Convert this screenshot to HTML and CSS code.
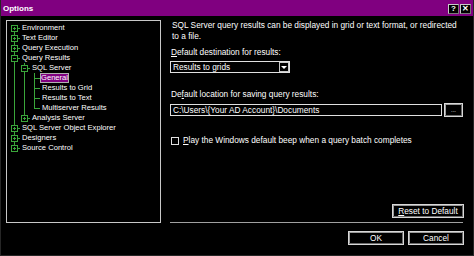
FILE: index.html
```html
<!DOCTYPE html>
<html lang="en">
<head>
<meta charset="UTF-8">
<title>Options</title>
<link rel="stylesheet" href="styles.css">
</head>
<body>
<svg class="defs" width="0" height="0">
    <symbol id="plus" viewBox="0 0 7 7">
        <rect x="0.5" y="0.5" width="6" height="6" fill="#000" stroke="#3aa63a"/>
        <path d="M2 3.5h3M3.5 2v3" stroke="#3aa63a"/>
    </symbol>
    <symbol id="minus" viewBox="0 0 7 7">
        <rect x="0.5" y="0.5" width="6" height="6" fill="#000" stroke="#3aa63a"/>
        <path d="M2 3.5h3" stroke="#3aa63a"/>
    </symbol>
</svg>

<div class="window">
    <div class="titlebar">
        <span class="title">Options</span>
        <div class="title-buttons">
            <span class="tbtn">?</span>
            <span class="tbtn">✕</span>
        </div>
    </div>

    <div class="content">
        <div class="tree">
            <div class="row"><span class="conn first"><svg class="ex"><use href="#plus"/></svg></span><span class="label">Environment</span></div>
            <div class="row"><span class="conn mid"><svg class="ex"><use href="#plus"/></svg></span><span class="label">Text Editor</span></div>
            <div class="row"><span class="conn mid"><svg class="ex"><use href="#plus"/></svg></span><span class="label">Query Execution</span></div>
            <div class="row"><span class="conn mid"><svg class="ex"><use href="#minus"/></svg></span><span class="label">Query Results</span></div>
            <div class="row"><span class="rail line"></span><span class="conn mid"><svg class="ex"><use href="#minus"/></svg></span><span class="label">SQL Server</span></div>
            <div class="row"><span class="rail line"></span><span class="rail line"></span><span class="conn mid"></span><span class="label selected">General</span></div>
            <div class="row"><span class="rail line"></span><span class="rail line"></span><span class="conn mid"></span><span class="label">Results to Grid</span></div>
            <div class="row"><span class="rail line"></span><span class="rail line"></span><span class="conn mid"></span><span class="label">Results to Text</span></div>
            <div class="row"><span class="rail line"></span><span class="rail line"></span><span class="conn last"></span><span class="label">Multiserver Results</span></div>
            <div class="row"><span class="rail line"></span><span class="conn last"><svg class="ex"><use href="#plus"/></svg></span><span class="label">Analysis Server</span></div>
            <div class="row"><span class="conn mid"><svg class="ex"><use href="#plus"/></svg></span><span class="label">SQL Server Object Explorer</span></div>
            <div class="row"><span class="conn mid"><svg class="ex"><use href="#plus"/></svg></span><span class="label">Designers</span></div>
            <div class="row"><span class="conn last"><svg class="ex"><use href="#plus"/></svg></span><span class="label">Source Control</span></div>
        </div>

        <div class="options">
            <p class="desc">SQL Server query results can be displayed in grid or text format, or redirected to a file.</p>

            <label class="field-label"><u>D</u>efault destination for results:</label>
            <div class="select">
                <span>Results to grids</span>
                <span class="arrow"></span>
            </div>

            <label class="field-label field-gap">De<u>f</u>ault location for saving query results:</label>
            <div class="path-row">
                <div class="textbox">C:\Users\{Your AD Account}\Documents</div>
                <span class="btn browse">...</span>
            </div>

            <div class="check-row">
                <span class="checkbox"></span>
                <span><u>P</u>lay the Windows default beep when a query batch completes</span>
            </div>

            <div class="reset-row">
                <span class="btn reset"><u>R</u>eset to Default</span>
            </div>
            <div class="separator"></div>
        </div>
    </div>

    <div class="footer">
        <span class="btn dlg">OK</span>
        <span class="btn dlg">Cancel</span>
    </div>
</div>
</body>
</html>
```

FILE: styles.css
```css
body {
    margin: 0;
    background-color: #000;
    font-family: "Liberation Sans", Arial, sans-serif;
    font-size: 7.6px;
    color: #fff;
}

.defs {
    display: block;
    width: 0;
    height: 0;
}

.window {
    width: 474px;
    height: 256px;
    box-sizing: border-box;
    border: 1px solid #262626;
    border-top: none;
    background-color: #000;
}

.titlebar {
    height: 16px;
    background-color: #800080;
    display: flex;
    align-items: center;
    justify-content: space-between;
    padding: 0 2px 0 2px;
}

.title {
    font-weight: bold;
    font-size: 8px;
}

.title-buttons {
    display: flex;
    gap: 1px;
    padding-top: 1px;
}

.tbtn {
    width: 11px;
    height: 10px;
    box-sizing: border-box;
    border: 1px solid #c8c8c8;
    border-right-color: #777;
    border-bottom-color: #777;
    background-color: #000;
    font-weight: bold;
    font-size: 8px;
    line-height: 8px;
    text-align: center;
}

.content {
    display: flex;
    padding: 4px 9px 0 5px;
    gap: 9px;
}

.tree {
    width: 155px;
    height: 203px;
    box-sizing: border-box;
    border: 1px solid #c8c8c8;
    padding: 2px 0 0 0;
}

.row {
    display: flex;
    height: 10px;
    line-height: 10px;
    white-space: nowrap;
}

.rail {
    width: 10px;
    height: 10px;
    flex: none;
}

.rail.line {
    background: linear-gradient(#3aa63a, #3aa63a) 7px 0 / 1px 10px no-repeat;
}

.conn {
    width: 14px;
    height: 10px;
    flex: none;
}

.conn.mid {
    background:
        linear-gradient(#3aa63a, #3aa63a) 7px 5px / 6px 1px no-repeat,
        linear-gradient(#3aa63a, #3aa63a) 7px 0 / 1px 10px no-repeat;
}

.conn.first {
    background:
        linear-gradient(#3aa63a, #3aa63a) 7px 5px / 6px 1px no-repeat,
        linear-gradient(#3aa63a, #3aa63a) 7px 5px / 1px 5px no-repeat;
}

.conn.last {
    background:
        linear-gradient(#3aa63a, #3aa63a) 7px 5px / 6px 1px no-repeat,
        linear-gradient(#3aa63a, #3aa63a) 7px 0 / 1px 6px no-repeat;
}

.ex {
    display: block;
    width: 7px;
    height: 7px;
    margin: 2px 0 0 4px;
}

.label {
    padding: 0 1px;
}

.label.selected {
    margin-left: -1px;
    background-color: #800080;
    box-shadow: inset 0 0 0 1px #b0b0b0;
}

.options {
    width: 294px;
    height: 203px;
    display: flex;
    flex-direction: column;
    font-size: 8.3px;
}

.desc {
    width: 288px;
    margin: 0 0 5px 2px;
    line-height: 11px;
}

.field-label {
    display: block;
    line-height: 11px;
    margin-left: 1px;
    margin-bottom: 3px;
}

.field-gap {
    margin-top: 16px;
}

.select {
    width: 120px;
    height: 12px;
    box-sizing: border-box;
    border: 1px solid #e0e0e0;
    display: flex;
    align-items: center;
    justify-content: space-between;
    padding-left: 2px;
}

.arrow {
    width: 10px;
    height: 10px;
    box-sizing: border-box;
    border: 1px solid #c8c8c8;
    display: flex;
    align-items: center;
    justify-content: center;
}

.arrow::after {
    content: "";
    border-left: 3px solid transparent;
    border-right: 3px solid transparent;
    border-top: 3px solid #fff;
}

.path-row {
    display: flex;
    align-items: center;
    gap: 2px;
}

.textbox {
    width: 272px;
    height: 12px;
    box-sizing: border-box;
    border: 1px solid #e0e0e0;
    padding-left: 2px;
    line-height: 10px;
    white-space: nowrap;
}

.btn {
    box-sizing: border-box;
    border: 1px solid #d8d8d8;
    box-shadow: inset -1px -1px #6a6a6a, inset 1px 1px #9a9a9a;
    display: flex;
    align-items: center;
    justify-content: center;
    white-space: nowrap;
}

.browse {
    width: 19px;
    height: 14px;
    font-size: 6px;
}

.check-row {
    display: flex;
    align-items: center;
    gap: 4px;
    margin: 18px 0 0 1px;
    line-height: 11px;
}

.checkbox {
    width: 6px;
    height: 6px;
    border: 1px solid #e0e0e0;
    flex: none;
}

.reset-row {
    margin-top: auto;
    display: flex;
    justify-content: flex-end;
    margin-bottom: 4px;
}

.reset {
    width: 72px;
    height: 14px;
}

.separator {
    height: 1px;
    background-color: #a0a0a0;
    width: 293px;
}

.footer {
    display: flex;
    justify-content: flex-end;
    gap: 4px;
    padding: 8px 9px 0 0;
    font-size: 8.3px;
}

.dlg {
    width: 56px;
    height: 14px;
}
```
